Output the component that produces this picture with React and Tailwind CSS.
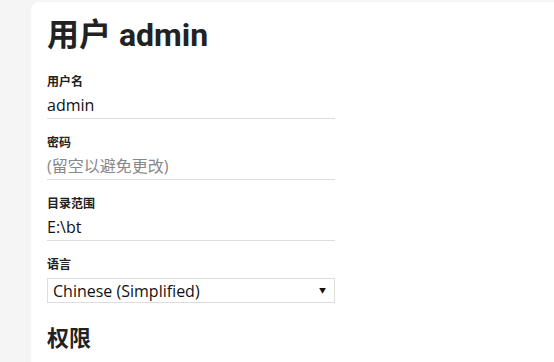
import React from "react";

export default function App() {
  const fields = [
    { label: "用户名", value: "admin" },
    { label: "密码", placeholder: "(留空以避免更改)" },
    { label: "目录范围", value: "E:\\bt" },
  ];

  return (
    <div className="h-screen bg-[#f5f5f5] pl-[31px] pt-[2px] overflow-hidden">
      <div className="bg-white rounded-tl-lg w-[600px] h-[400px] pl-4 pt-[11px] text-[#222]">
        <h1 className="text-[32px] leading-[44px] font-bold" style={{ fontFamily: "Roboto, 'Noto Sans CJK SC', sans-serif" }}>
          用户 admin
        </h1>

        <div className="mt-[16px] w-[288px]" style={{ fontFamily: "'Open Sans', 'Noto Sans CJK SC', sans-serif" }}>
          {fields.map((f) => (
            <div key={f.label} className="mb-[15px]">
              <div className="text-[12px] leading-[18px] font-bold">{f.label}</div>
              <div className="mt-[2px] h-[26px] border-b border-[#ddd] text-[16px] leading-[24px]">
                {f.value ? (
                  <span className="text-[#111]">{f.value}</span>
                ) : (
                  <span className="text-[#888]">{f.placeholder}</span>
                )}
              </div>
            </div>
          ))}

          <div>
            <div className="text-[12px] leading-[18px] font-bold">语言</div>
            <div className="mt-[4px] h-[25px] border border-[#ddd] flex items-center justify-between pl-[5px] pr-[8px] text-[16px] text-[#111]">
              <span>Chinese (Simplified)</span>
              <span className="text-[7px] leading-none">▼</span>
            </div>
          </div>
        </div>

        <h2 className="mt-[21px] text-[22px] leading-[30px] font-bold" style={{ fontFamily: "Roboto, 'Noto Sans CJK SC', sans-serif" }}>
          权限
        </h2>
      </div>
    </div>
  );
}
